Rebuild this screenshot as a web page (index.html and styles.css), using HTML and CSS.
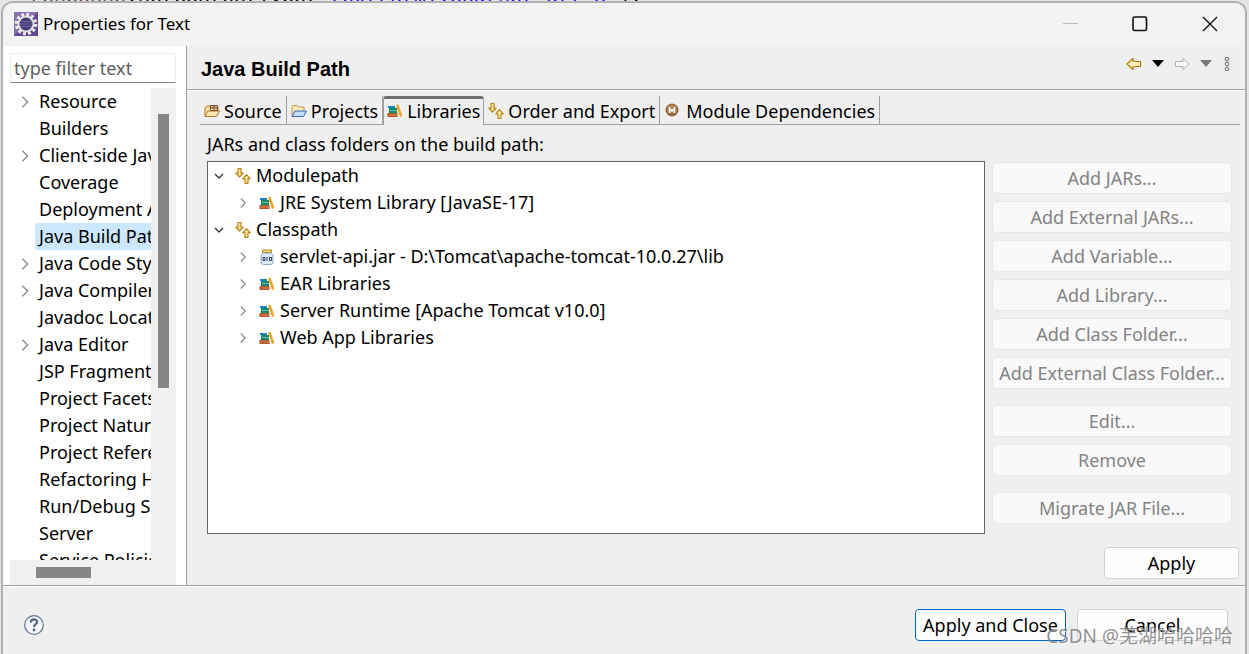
FILE: index.html
```html
<!DOCTYPE html>
<html lang="en">
<head>
    <meta charset="UTF-8">
    <meta name="viewport" content="width=device-width, initial-scale=1.0">
    <title>Properties for Text</title>
    <link rel="stylesheet" href="styles.css">
</head>
<body>
    <!-- shared icons -->
    <svg class="sprite" aria-hidden="true">
        <symbol id="i-right" viewBox="0 0 10 16"><path d="M2 2l6 6-6 6" fill="none" stroke="#8a8a8a" stroke-width="1.6"/></symbol>
        <symbol id="i-down" viewBox="0 0 10 10"><path d="M1 3l4 4 4-4" fill="none" stroke="#333" stroke-width="1.3"/></symbol>
        <symbol id="i-order" viewBox="0 0 16 16">
            <path d="M3 .5h3V5h2.200L4.500 9 .8 5H3z" fill="#ffe39a" stroke="#b98518" stroke-width="1.200" stroke-linejoin="round"/>
            <path d="M10 15.300h3v-4.500h2.200L11.500 6.600 7.800 10.800H10z" fill="#ffe9a6" stroke="#b98518" stroke-width="1.200" stroke-linejoin="round"/>
        </symbol>
        <symbol id="i-books" viewBox="0 0 16 16">
            <path d="M1 3h7v2H1z" fill="#1784c4"/>
            <path d="M2 5h8v5H2z" fill="#17866b"/>
            <path d="M3 7h7v1H3z" fill="#6cc4a0"/>
            <path d="M.5 10h10v4H.5z" fill="#b4572a"/>
            <path d="M2 11.500h8v1H2z" fill="#d98a5b"/>
            <path d="M9 2.500l2.500-1 4 11.500-2.500 1z" fill="#eda52c"/>
        </symbol>
        <symbol id="i-jar" viewBox="0 0 16 16">
            <path d="M3.500 1h9v2.500h-9z" fill="#f5d56d" stroke="#b48a1c"/>
            <path d="M4 4h8c1 1 2 1.500 2 3v6c0 1.500-1 2.500-2.500 2.500h-7C3 15.500 2 14.500 2 13V7c0-1.500 1-2 2-3z" fill="#dce9f8" stroke="#8da5c4"/>
            <path d="M4 8.500h2v3H4zM8 8v4M10.500 8.500h2v3h-2z" fill="none" stroke="#27426b"/>
        </symbol>
    </svg>

    <div class="backdrop" aria-hidden="true"><code><span class="var">response</span>.setContentType(<span class="str">"text/html;charset=utf-8"</span>);</code></div>

    <div class="window">
        <header class="titlebar">
            <svg class="app-icon" viewBox="0 0 24 24">
                <rect width="24" height="24" fill="#62498f"/>
                <path d="M0 0h24L0 24z" fill="#8270ab"/>
                <circle cx="12" cy="12" r="9.500" fill="none" stroke="#f1eee8" stroke-width="3.500" stroke-dasharray="2.800 2.174"/>
                <circle cx="12" cy="12" r="7.500" fill="#463b78" stroke="#e4e0dc" stroke-width="2"/>
                <path d="M6 9.500h12M5.500 12h13M6 14.500h12" stroke="#6f66a0" stroke-width="1"/>
            </svg>
            <span class="caption">Properties for Text</span>
            <button class="win-btn" aria-label="Minimize"><svg viewBox="0 0 16 16"><path d="M1 7.500h15" stroke="#bdbdbd"/></svg></button>
            <button class="win-btn" aria-label="Maximize"><svg viewBox="0 0 16 16"><rect x="1" y="1" width="13.500" height="13.500" rx="1.500" fill="none" stroke="#111" stroke-width="1.600"/></svg></button>
            <button class="win-btn" aria-label="Close"><svg viewBox="0 0 16 16"><path d="M1 1l14 14M15 1L1 15" stroke="#111" stroke-width="1.400"/></svg></button>
        </header>

        <div class="main">
            <aside class="sidebar">
                <input class="filter" type="text" placeholder="type filter text" aria-label="type filter text">
                <div class="scroller">
                    <nav class="pages">
                        <a href="#"><svg><use href="#i-right"/></svg>Resource</a>
                        <a href="#">Builders</a>
                        <a href="#"><svg><use href="#i-right"/></svg>Client-side JavaScript</a>
                        <a href="#">Coverage</a>
                        <a href="#">Deployment Assembly</a>
                        <a href="#" class="current"><span>Java Build Path</span></a>
                        <a href="#"><svg><use href="#i-right"/></svg>Java Code Style</a>
                        <a href="#"><svg><use href="#i-right"/></svg>Java Compiler</a>
                        <a href="#">Javadoc Location</a>
                        <a href="#"><svg><use href="#i-right"/></svg>Java Editor</a>
                        <a href="#">JSP Fragment</a>
                        <a href="#">Project Facets</a>
                        <a href="#">Project Natures</a>
                        <a href="#">Project References</a>
                        <a href="#">Refactoring History</a>
                        <a href="#">Run/Debug Settings</a>
                        <a href="#">Server</a>
                        <a href="#">Service Policies</a>
                    </nav>
                    <div class="vbar"><div class="thumb"></div></div>
                    <div class="hbar"><div class="thumb"></div></div>
                </div>
            </aside>

            <main class="page">
                <div class="page-head">
                    <h1>Java Build Path</h1>
                    <button class="tool" aria-label="Back"><svg width="16" height="14" viewBox="0 0 16 14"><path d="M1 7l6-5.500v3h7.500v5H7v3z" fill="#fff0c0" stroke="#b9770e" stroke-width="1.200" stroke-linejoin="round"/></svg></button>
                    <button class="tool" aria-label="Back history"><svg width="12" height="7" viewBox="0 0 12 7"><path d="M0 0h12L6 7z"/></svg></button>
                    <button class="tool" aria-label="Forward"><svg width="16" height="14" viewBox="0 0 16 14"><path d="M15 7L9 1.500v3H1.500v5H9v3z" fill="#f6f6f6" stroke="#b0b0b0" stroke-linejoin="round"/></svg></button>
                    <button class="tool" aria-label="Forward history"><svg width="12" height="7" viewBox="0 0 12 7"><path d="M0 0h12L6 7z" fill="#77777b"/></svg></button>
                    <button class="tool" aria-label="View menu"><svg width="10" height="16" viewBox="0 0 10 16"><g fill="none" stroke="#666"><circle cx="5" cy="3" r="1.800"/><circle cx="5" cy="8" r="1.800"/><circle cx="5" cy="13" r="1.800"/></g></svg></button>
                </div>

                <div class="tabs" role="tablist">
                    <button role="tab"><svg viewBox="0 0 16 16"><path d="M1 13V5l2-2h3l1 1h7v4" fill="#f7dc9a" stroke="#b27a33"/><path d="M1 13.500L4 8h11.500l-3 5.500z" fill="#fbe5ae" stroke="#b27a33"/><path d="M6.500 2.500h7v5h-7zM6 5h8M10 2v6" fill="none" stroke="#75503a"/></svg>Source</button>
                    <button role="tab"><svg viewBox="0 0 16 16"><path d="M1 13V4l1-1.500h4L7 4h6v4" fill="#fbeab5" stroke="#c09a4d"/><path d="M1 13.500L4 8h11.500l-3 5.500z" fill="#c5dcf9" stroke="#3b67b4"/></svg>Projects</button>
                    <button role="tab" class="active" aria-selected="true"><svg><use href="#i-books"/></svg>Libraries</button>
                    <button role="tab"><svg><use href="#i-order"/></svg>Order and Export</button>
                    <button role="tab" class="wide"><svg viewBox="0 0 16 16"><circle cx="8" cy="7" r="6.500" fill="#98683a"/><circle cx="8" cy="6" r="4.500" fill="#b38858"/><path d="M5.500 10V5L8 8l2.500-3v5" fill="none" stroke="#fff" stroke-width="1.500"/></svg>Module Dependencies</button>
                </div>

                <div class="content">
                    <p class="hint">JARs and class folders on the build path:</p>
                    <div class="columns">
                        <ul class="tree">
                            <li><svg class="tw"><use href="#i-down"/></svg><svg><use href="#i-order"/></svg>Modulepath</li>
                            <li class="child"><svg class="tw"><use href="#i-right"/></svg><svg><use href="#i-books"/></svg>JRE System Library [JavaSE-17]</li>
                            <li><svg class="tw"><use href="#i-down"/></svg><svg><use href="#i-order"/></svg>Classpath</li>
                            <li class="child"><svg class="tw"><use href="#i-right"/></svg><svg><use href="#i-jar"/></svg>servlet-api.jar - D:\Tomcat\apache-tomcat-10.0.27\lib</li>
                            <li class="child"><svg class="tw"><use href="#i-right"/></svg><svg><use href="#i-books"/></svg>EAR Libraries</li>
                            <li class="child"><svg class="tw"><use href="#i-right"/></svg><svg><use href="#i-books"/></svg>Server Runtime [Apache Tomcat v10.0]</li>
                            <li class="child"><svg class="tw"><use href="#i-right"/></svg><svg><use href="#i-books"/></svg>Web App Libraries</li>
                        </ul>
                        <div class="actions">
                            <button class="btn" disabled>Add JARs...</button>
                            <button class="btn" disabled>Add External JARs...</button>
                            <button class="btn" disabled>Add Variable...</button>
                            <button class="btn" disabled>Add Library...</button>
                            <button class="btn" disabled>Add Class Folder...</button>
                            <button class="btn" disabled>Add External Class Folder...</button>
                            <button class="btn group" disabled>Edit...</button>
                            <button class="btn" disabled>Remove</button>
                            <button class="btn group" disabled>Migrate JAR File...</button>
                        </div>
                    </div>
                </div>
                <div class="apply-row"><button class="btn">Apply</button></div>
            </main>
        </div>

        <footer class="footer">
            <button class="help" aria-label="Help"><svg viewBox="0 0 20 20"><circle cx="10" cy="10" r="9.300" fill="#f5f6f9" stroke="#5f7391" stroke-width="1.200"/><path d="M6.800 7.500c0-4 6.400-4 6.400-.5 0 2.300-3.200 2.200-3.200 5" fill="none" stroke="#4f6588" stroke-width="2.200"/><circle cx="10" cy="15" r="1.400" fill="#4f6588"/></svg></button>
            <button class="btn default">Apply and Close</button>
            <button class="btn">Cancel</button>
        </footer>
    </div>
    <div class="watermark">CSDN @芜湖哈哈哈哈</div>
</body>
</html>
```

FILE: styles.css
```css
* {
    box-sizing: border-box;
}
body {
    margin: 0;
    height: 100vh;
    display: flex;
    flex-direction: column;
    overflow: hidden;
    position: relative;
    background: #e4e5e4;
    color: #000;
    font-family: "Noto Sans", "Noto Sans CJK SC", sans-serif;
    font-size: 18px;
    line-height: 27px;
}
button, input {
    font: inherit;
    color: inherit;
}
svg {
    flex: none;
    width: 16px;
    height: 16px;
}
.sprite {
    display: none;
}

/* editor line that shows behind the dialog */
.backdrop {
    position: absolute;
    top: 0;
    left: 30px;
    height: 3px;
    display: flex;
    align-items: flex-end;
    overflow: hidden;
    white-space: pre;
}
.backdrop code {
    font: 20px/10px "Liberation Mono", monospace;
}
.backdrop .var { color: #6a3e3e; }
.backdrop .str { color: #2a00ff; }

.window {
    flex: 1;
    min-height: 0;
    display: flex;
    flex-direction: column;
    margin: 1px 2px 0 1px;
    border: 2px solid #b1b1b1;
    border-bottom: 0;
    border-radius: 12px 12px 0 0;
    overflow: hidden;
    background: #efefef;
    position: relative;
}
.titlebar {
    display: flex;
    align-items: center;
    height: 43px;
    padding: 0 0 2px 11px;
    background: #f3f3f3;
}
.app-icon {
    width: 24px;
    height: 24px;
}
.caption {
    flex: 1;
    margin-left: 5px;
    font-size: 17px;
}
.win-btn {
    width: 70px;
    height: 41px;
    padding: 0;
    border: 0;
    background: none;
    line-height: 0;
}

.main {
    flex: 1;
    min-height: 0;
    display: flex;
    border-bottom: 1px solid #a0a0a0;
}
.sidebar {
    flex: none;
    width: 184px;
    display: flex;
    flex-direction: column;
    padding: 7px 10px 0 7px;
    background: #fff;
    border-right: 1px solid #a0a0a0;
}
.filter {
    width: 100%;
    height: 30px;
    margin-bottom: 5px;
    padding: 0 3px;
    border: 1px solid #ececec;
    border-bottom-color: #868686;
    background: #fff;
}
.filter::placeholder {
    color: #5d5d5d;
    opacity: 1;
}
.scroller {
    flex: 1;
    min-height: 0;
    display: grid;
    grid-template-columns: 1fr 25px;
    grid-template-rows: 1fr 25px;
}
.pages {
    min-width: 0;
    min-height: 0;
    overflow: hidden;
}
.pages a {
    display: flex;
    align-items: center;
    height: 27px;
    padding-left: 29px;
    color: #000;
    text-decoration: none;
    white-space: nowrap;
}
.pages svg {
    width: 10px;
    height: 14px;
    margin: 0 9px 0 -19px;
}
.pages .current {
    padding-left: 25px;
}
.pages .current span {
    padding-left: 4px;
    border-radius: 3px;
    background: #cce8ff;
}
.vbar, .hbar {
    background: #f0f0f0;
}
.vbar {
    padding: 26px 7px 0;
}
.hbar {
    grid-column: 1 / 3;
    padding: 7px 26px;
}
.thumb {
    background: #868686;
}
.vbar .thumb {
    height: 274px;
}
.hbar .thumb {
    width: 55px;
    height: 11px;
}

.page {
    flex: 1;
    min-width: 0;
    display: flex;
    flex-direction: column;
}
.page-head {
    display: flex;
    align-items: center;
    height: 44px;
    padding: 0 13px 0 14px;
    border-bottom: 1px solid #a0a0a0;
    box-shadow: 0 1px #fff;
}
.page-head h1 {
    flex: 1;
    margin: 4px 0 0;
    font-family: "Liberation Sans", sans-serif;
    font-size: 20px;
    line-height: 27px;
}
.tool {
    display: flex;
    align-items: center;
    justify-content: center;
    height: 24px;
    margin: 0 0 8px 10px;
    padding: 0;
    border: 0;
    background: none;
}
.tool svg {
    width: auto;
    height: auto;
}
.tabs {
    display: flex;
    height: 29px;
    margin: 6px 5px 0 13px;
    border-bottom: 1px solid #a0a0a0;
}
.tabs button {
    display: flex;
    align-items: center;
    gap: 4px;
    height: 28px;
    padding: 2px 4px 0;
    border: 0;
    border-right: 1px solid #a0a0a0;
    background: none;
    white-space: nowrap;
}
.tabs .active {
    height: 29px;
    border-top: 3px solid #707070;
    border-left: 1px solid #a0a0a0;
    border-radius: 3px 3px 0 0;
    padding: 0 3px 2px;
    background: #efefef;
}
.tabs .wide {
    gap: 6px;
}

.content {
    flex: 1;
    min-height: 0;
    display: flex;
    flex-direction: column;
    padding: 6px 13px 0 20px;
}
.hint {
    margin: 0 0 3px;
}
.columns {
    flex: 1;
    min-height: 0;
    display: flex;
    gap: 7px;
}
.tree {
    flex: 1;
    min-width: 0;
    margin: 0;
    padding: 0 6px;
    border: 1px solid #646464;
    background: #fff;
    list-style: none;
    overflow: hidden;
}
.tree li {
    display: flex;
    align-items: center;
    gap: 5px;
    height: 27px;
    white-space: nowrap;
}
.tree .child {
    padding-left: 24px;
}
.tree .tw {
    width: 10px;
    height: 12px;
    margin-right: 6px;
}
.actions {
    display: flex;
    flex-direction: column;
    gap: 7px;
    width: 240px;
    padding-top: 1px;
}
.btn {
    height: 32px;
    padding: 0;
    border: 1px solid #d0d0d0;
    border-radius: 4px;
    background: #fdfdfd;
    white-space: nowrap;
}
.btn:disabled {
    border-color: #e7e7e7;
    background: #f9f9f9;
    color: #838383;
}
.actions .group {
    margin-top: 9px;
}
.apply-row {
    display: flex;
    justify-content: flex-end;
    padding: 13px 6px 6px;
}
.apply-row .btn {
    width: 135px;
}

.footer {
    display: flex;
    align-items: center;
    gap: 11px;
    height: 68px;
    padding: 10px 17px 0 21px;
    box-shadow: inset 0 1px #fff;
}
.footer .btn {
    width: 151px;
}
.footer .default {
    border-color: #0067c0;
}
.help {
    width: 20px;
    height: 20px;
    margin-right: auto;
    padding: 0;
    border: 0;
    background: none;
    line-height: 0;
}
.help svg {
    width: 20px;
    height: 20px;
}

.watermark {
    position: absolute;
    right: 16px;
    bottom: 4px;
    font-size: 19px;
    color: rgba(110, 110, 110, 0.75);
    text-shadow: 1px 1px rgba(255, 255, 255, 0.5);
}
```
